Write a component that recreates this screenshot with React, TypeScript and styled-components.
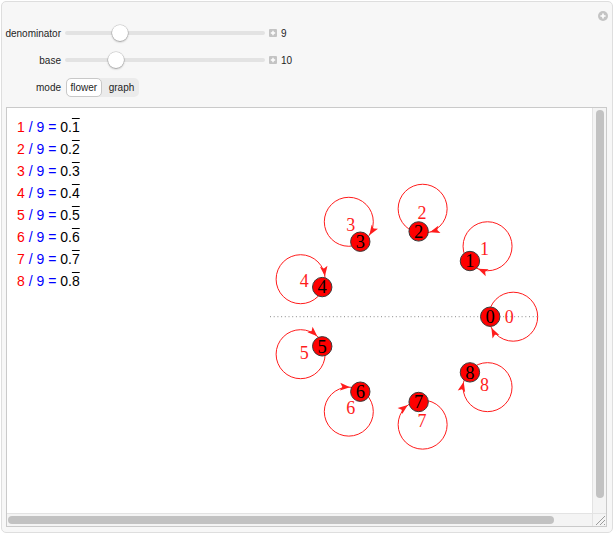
import React from "react";
import styled, { createGlobalStyle } from "styled-components";

const Global = createGlobalStyle`
  html, body { margin: 0; padding: 0; background: #fff; }
  body { font-family: "Liberation Sans", Arial, sans-serif; }
`;

const Panel = styled.div`
  box-sizing: border-box;
  width: 612px;
  height: 532px;
  margin: 1px 0 0 1px;
  border: 1px solid #dedede;
  border-radius: 5px;
  background: #f7f7f7;
  display: flex;
  flex-direction: column;
`;

const TopBar = styled.div`
  display: flex;
  justify-content: flex-end;
  padding: 9px 4px 0 0;
  height: 10px;
`;

const Controls = styled.div`
  display: flex;
  flex-direction: column;
  gap: 5px;
  margin-top: 1px;
`;

const Row = styled.div`
  display: flex;
  align-items: center;
  height: 22px;
  gap: 4px;
`;

const Label = styled.div`
  width: 59px;
  text-align: right;
  font-size: 10px;
  color: #1e1e1e;
`;

const Slider = styled.div`
  position: relative;
  width: 200px;
  height: 22px;
  display: flex;
  align-items: center;
`;

const Track = styled.div`
  width: 100%;
  height: 4px;
  border-radius: 2px;
  background: #e3e3e3;
`;

const Thumb = styled.div<{ $left: number }>`
  position: absolute;
  top: 50%;
  left: ${(p) => p.$left}px;
  width: 16px;
  height: 16px;
  border-radius: 50%;
  background: #fff;
  box-shadow: 0 0 0 0.5px rgba(0, 0, 0, 0.2), 0 1px 2px rgba(0, 0, 0, 0.3);
  transform: translate(-50%, -50%);
`;

const PlusBox = styled.div`
  width: 8px;
  height: 8px;
  background: #c4c4c4;
  border-radius: 1px;
  display: flex;
  align-items: center;
  justify-content: center;
`;

const Value = styled.div`
  font-size: 10px;
  color: #1e1e1e;
`;

const Toggle = styled.div`
  margin-left: 1px;
  display: flex;
  align-items: center;
  height: 19px;
  background: #ebebeb;
  border-radius: 5px;
`;

const ToggleBtn = styled.div<{ $active?: boolean }>`
  box-sizing: border-box;
  height: 19px;
  display: flex;
  align-items: center;
  font-size: 10px;
  color: #1e1e1e;
  padding: ${(p) => (p.$active ? "0 3.5px" : "0 5px 0 7px")};
  background: ${(p) => (p.$active ? "#fff" : "transparent")};
  border: ${(p) => (p.$active ? "1px solid #c8c8c8" : "none")};
  border-radius: 5px;
`;

const Pane = styled.div`
  flex: 1;
  margin: 9px 5px 5px 4px;
  border: 1px solid #cacaca;
  background: #fff;
  display: grid;
  grid-template-columns: 1fr 14px;
  grid-template-rows: 1fr 13px;
  min-height: 0;
`;

const Content = styled.div`
  overflow: hidden;
  display: flex;
  align-items: flex-start;
  padding: 8px 0 0 10px;
`;

const Listing = styled.div`
  width: 100px;
  flex: none;
  font-size: 14px;
  line-height: 22px;
  color: #000;
  white-space: pre;
`;

const Num = styled.span`
  color: #ff0000;
`;

const Den = styled.span`
  color: #0000ff;
`;

const Over = styled.span`
  text-decoration: overline;
  text-decoration-thickness: 1px;
`;

const GraphSvg = styled.svg`
  flex: none;
  margin: 54px 0 0 143px;
  overflow: visible;
`;

const VScroll = styled.div`
  background: #f4f4f4;
  border-left: 1px solid #e3e3e3;
  display: flex;
  justify-content: center;
  padding-top: 2px;
`;

const VThumb = styled.div`
  width: 8px;
  height: 388px;
  border-radius: 4px;
  background: #c2c2c2;
`;

const HScroll = styled.div`
  background: #f4f4f4;
  border-top: 1px solid #e3e3e3;
  display: flex;
  align-items: center;
  padding-left: 1px;
`;

const HThumb = styled.div`
  width: 546px;
  height: 8px;
  border-radius: 4px;
  background: #c2c2c2;
`;

const Corner = styled.div`
  background: #f4f4f4;
  border-top: 1px solid #e3e3e3;
  border-left: 1px solid #e3e3e3;
  display: flex;
  align-items: flex-end;
  justify-content: flex-end;
`;

const PlusIcon = () => (
  <svg width="6" height="6" viewBox="0 0 6 6">
    <path d="M3 0.8V5.2M0.8 3H5.2" stroke="#fff" strokeWidth="1.4" />
  </svg>
);

const CircleAdd = () => (
  <svg width="10" height="10" viewBox="0 0 10 10">
    <circle cx="5" cy="5" r="5" fill="#c4c4c4" />
    <path d="M5 2.4V7.6M2.4 5H7.6" stroke="#fff" strokeWidth="1.6" />
  </svg>
);

const Grip = () => (
  <svg width="12" height="12" viewBox="0 0 12 12">
    <path d="M11 2L2 11M11 6L6 11M11 10L10 11" stroke="#9c9c9c" strokeWidth="1" />
  </svg>
);

const CX = 403.6;
const CY = 316.7;
const RAD = 86.6;
const LOOP_OFF = 23;
const LOOP_R = 24.5;

const nodes = Array.from({ length: 9 }, (_, k) => {
  const a = (k * 40 * Math.PI) / 180;
  const ux = Math.cos(a);
  const uy = -Math.sin(a);
  return { k, x: CX + RAD * ux, y: CY + RAD * uy, ux, uy };
});

const Graph = () => (
  <GraphSvg width="290" height="270" viewBox="260 170 290 270">
    <line
      x1="270"
      y1={CY}
      x2="539"
      y2={CY}
      stroke="#8a8a8a"
      strokeWidth="1"
      strokeDasharray="1 2.7"
    />
    {nodes.map((n) => {
      const lx = n.x + LOOP_OFF * n.ux;
      const ly = n.y + LOOP_OFF * n.uy;
      const tn = Math.atan2(-n.uy, -n.ux);
      const tt = tn - (27 * Math.PI) / 180;
      const px = lx + LOOP_R * Math.cos(tt);
      const py = ly + LOOP_R * Math.sin(tt);
      const tx = -Math.sin(tt);
      const ty = Math.cos(tt);
      const nx = Math.cos(tt);
      const ny = Math.sin(tt);
      const bx = px - 10 * tx;
      const by = py - 10 * ty;
      const pts = `${px},${py} ${bx + 3.8 * nx},${by + 3.8 * ny} ${bx + 2.2 * tx},${by + 2.2 * ty} ${bx - 3.8 * nx},${by - 3.8 * ny}`;
      return (
        <g key={`l${n.k}`}>
          <circle cx={lx} cy={ly} r={LOOP_R} fill="none" stroke="#ff1c1c" strokeWidth="1" />
          <polygon points={pts} fill="#ff1c1c" />
        </g>
      );
    })}
    {nodes.map((n) => (
      <g key={`n${n.k}`}>
        <circle cx={n.x} cy={n.y} r="9.7" fill="#ff0000" stroke="#3a3a3a" strokeWidth="1" />
        <text
          x={n.x}
          y={n.y + 6.2}
          textAnchor="middle"
          fontFamily="'Liberation Serif', 'Times New Roman', serif"
          fontSize="18.5"
          fill="#000"
        >
          {n.k}
        </text>
        <text
          x={n.x + 19 * n.ux}
          y={n.y + 19 * n.uy + 6.2}
          textAnchor="middle"
          fontFamily="'Liberation Serif', 'Times New Roman', serif"
          fontSize="18"
          fill="#ff1c1c"
        >
          {n.k}
        </text>
      </g>
    ))}
  </GraphSvg>
);

export default function App() {
  const lines = [1, 2, 3, 4, 5, 6, 7, 8];
  return (
    <>
      <Global />
      <Panel>
        <TopBar>
          <CircleAdd />
        </TopBar>
        <Controls>
          <Row>
            <Label>denominator</Label>
            <Slider>
              <Track />
              <Thumb $left={55} />
            </Slider>
            <PlusBox>
              <PlusIcon />
            </PlusBox>
            <Value>9</Value>
          </Row>
          <Row>
            <Label>base</Label>
            <Slider>
              <Track />
              <Thumb $left={51} />
            </Slider>
            <PlusBox>
              <PlusIcon />
            </PlusBox>
            <Value>10</Value>
          </Row>
          <Row>
            <Label>mode</Label>
            <Toggle>
              <ToggleBtn $active>flower</ToggleBtn>
              <ToggleBtn>graph</ToggleBtn>
            </Toggle>
          </Row>
        </Controls>
        <Pane>
          <Content>
            <Listing>
              {lines.map((k) => (
                <div key={k}>
                  <Num>{k}</Num> <Den>/ 9 =</Den> 0.<Over>{k}</Over>
                </div>
              ))}
            </Listing>
            <Graph />
          </Content>
          <VScroll>
            <VThumb />
          </VScroll>
          <HScroll>
            <HThumb />
          </HScroll>
          <Corner>
            <Grip />
          </Corner>
        </Pane>
      </Panel>
    </>
  );
}
